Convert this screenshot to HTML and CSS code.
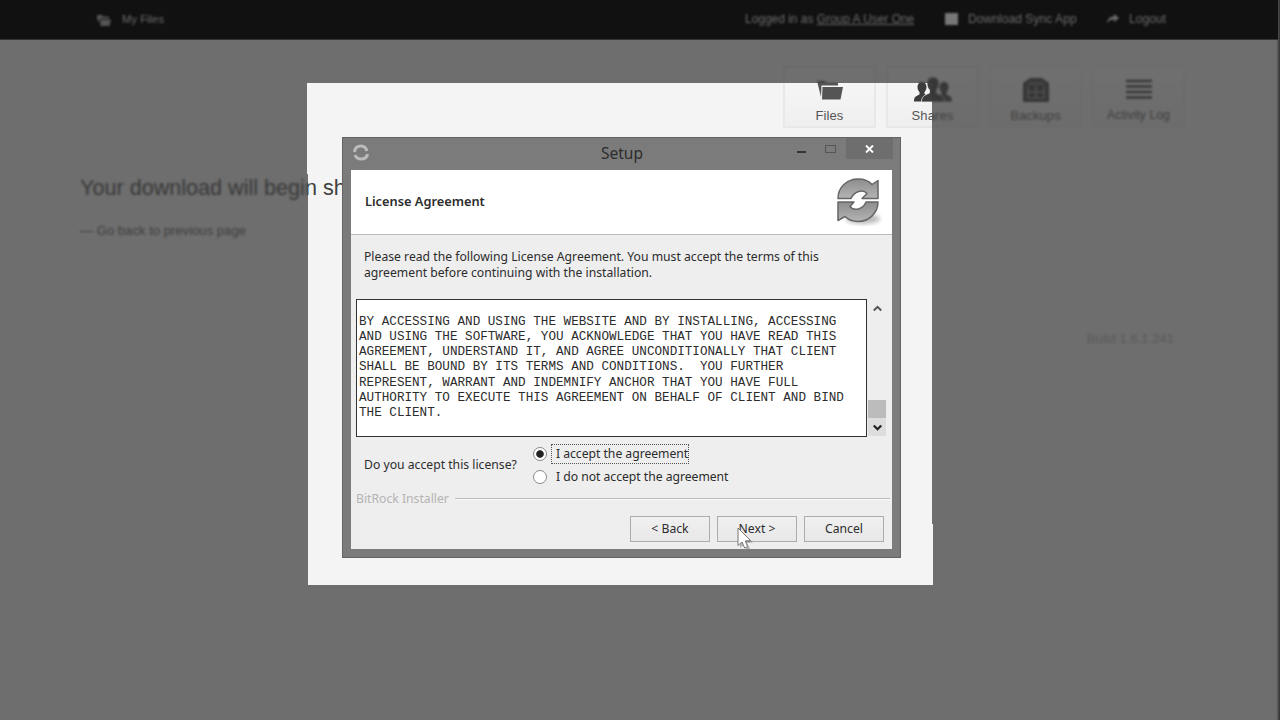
FILE: index.html
```html
<!DOCTYPE html>
<html lang="en">
<head>
<meta charset="utf-8">
<title>Setup</title>
<link rel="stylesheet" href="styles.css">
</head>
<body>
<div class="page">
  <header class="topbar">
    <span class="item my-files">
      <svg class="tb-folder" width="14" height="12" viewBox="0 0 14 12"><path d="M0 1h5l1 1.500h6v2H3.500L2 9 0 4zM4 5.500h10L12.500 12H3z" fill="currentColor"/></svg>
      <span>My Files</span>
    </span>
    <span class="item user">Logged in as&nbsp;<u>Group A User One</u></span>
    <span class="item download"><i class="square"></i><span>Download Sync App</span></span>
    <span class="item logout">
      <svg width="12" height="10" viewBox="0 0 12 10"><path d="M7 0l5 4-5 4V5.500C4 5.500 1.800 6.500 0 9c.5-4 3-6.500 7-6.500z" fill="currentColor"/></svg>
      <span>Logout</span>
    </span>
  </header>
  <nav class="tabs">
    <div class="tab">
      <svg width="28" height="22" viewBox="0 0 28 22"><path d="M1 0h8l1.500 2H22v2.500H5.500L5 16z M6.500 6H27l-2.500 12.500H6z" fill="#555"/></svg>
      <span>Files</span>
    </div>
    <div class="tab">
      <svg width="40" height="26" viewBox="0 0 40 26"><g fill="#3c3c3c"><path d="M9 5c3 0 4.500 2 4.500 5 0 2-.8 4-2 5v2l3 1.500-1 6H1c0-4 1-5 5.500-7v-2.500c-1.200-1-2-3-2-5C4.500 7 6 5 9 5zM31 5c-3 0-4.500 2-4.500 5 0 2 .8 4 2 5v2l-3 1.500 1 6H39c0-4-1-5-5.500-7v-2.500c1.200-1 2-3 2-5C35.500 7 34 5 31 5z"/><path stroke="#eee" stroke-width=".8" d="M20 0c4 0 6 3 6 6.500 0 3-1 5-2.500 6.500v3c6 2.500 8 4 8 9h-23c0-5 2-6.500 8-9v-3C15 11.500 14 9.500 14 6.500 14 3 16 0 20 0z"/></g></svg>
      <span>Shares</span>
    </div>
    <div class="tab">
      <svg width="26" height="26" viewBox="0 0 26 26"><path d="M0 6L7 1h12l7 5v19H0z" fill="#3c3c3c"/><path d="M5 6.500h16M5 9v12h16V9M5 15h16M13 9v12" fill="none" stroke="#888" stroke-width="1.500"/><path d="M7 9h4v4H7zM15 9h4v4h-4zM7 16h4v4H7zM15 16h4v4h-4z" fill="#333"/></svg>
      <span>Backups</span>
    </div>
    <div class="tab">
      <svg width="26" height="24" viewBox="0 0 26 24"><path d="M0 2h26M0 7.500h26M0 13h26M0 18.500h26" stroke="#3c3c3c" stroke-width="2.400"/></svg>
      <span>Activity Log</span>
    </div>
  </nav>
  <main class="content">
    <h1>Your download will begin sh</h1>
    <p class="back">— Go back to previous page</p>
    <p class="build">Build 1.6.1.241</p>
  </main>
</div>
<div class="dimmer"></div>

<section class="dialog">
  <div class="titlebar">
    <svg class="app-icon" width="16" height="17" viewBox="0 0 16 17"><path d="M1.500 8C2 3.500 5 2 8 2s5 1.500 6 5M14.500 10c-.5 4-3.500 5-6.500 5s-5-1.500-6-4" fill="none" stroke="#bbb" stroke-width="3"/></svg>
    <span class="title">Setup</span>
    <div class="controls">
      <i class="min"></i><i class="max"></i>
      <span class="close"><svg width="9" height="8" viewBox="0 0 9 8"><path d="M1 .5l7 7M8 .5l-7 7" stroke="#fff" stroke-width="1.900"/></svg></span>
    </div>
  </div>
  <div class="client">
    <div class="banner">
      <h2>License Agreement</h2>
      <svg class="sync" width="46" height="50" viewBox="0 0 46 50">
        <defs><linearGradient id="g" x1="0" y1="0" x2="0" y2="1"><stop offset="0" stop-color="#8d8d8d"/><stop offset="1" stop-color="#b4b4b4"/></linearGradient></defs>
        <ellipse class="soft" cx="27" cy="43" rx="17" ry="5" fill="#bbb"/>
        <g fill="url(#g)" stroke="#666" stroke-width="1.500" stroke-linejoin="round">
          <path d="M2 22.500C2 11 11 3 22 3c6 0 11 2 14 5.500l6-4v18H26l5-5c-4-5-13-2-16 5z"/>
          <path d="M42 26c0 11-9 19.500-20 19.500-6 0-10-2-13-5L2 44.500V26h16l-4 4.500c4 5 13 3 16-4.500z"/>
        </g>
      </svg>
    </div>
    <p class="intro">Please read the following License Agreement. You must accept the terms of this<br>agreement before continuing with the installation.</p>
    <div class="license">
      <pre>BY ACCESSING AND USING THE WEBSITE AND BY INSTALLING, ACCESSING
AND USING THE SOFTWARE, YOU ACKNOWLEDGE THAT YOU HAVE READ THIS
AGREEMENT, UNDERSTAND IT, AND AGREE UNCONDITIONALLY THAT CLIENT
SHALL BE BOUND BY ITS TERMS AND CONDITIONS.  YOU FURTHER
REPRESENT, WARRANT AND INDEMNIFY ANCHOR THAT YOU HAVE FULL
AUTHORITY TO EXECUTE THIS AGREEMENT ON BEHALF OF CLIENT AND BIND
THE CLIENT.</pre>
      <div class="scroll">
        <svg width="9" height="7" viewBox="0 0 9 7"><path d="M.8 5.500L4.500 1.800l3.700 3.700" fill="none" stroke="#555" stroke-width="2"/></svg>
        <i class="thumb"></i>
        <span class="down"><svg width="9" height="7" viewBox="0 0 9 7"><path d="M.8 1.500l3.700 3.700 3.700-3.700" fill="none" stroke="#222" stroke-width="2.300"/></svg></span>
      </div>
    </div>
    <div class="question">
      <span class="ask">Do you accept this license?</span>
      <div class="options">
        <div class="option"><i class="radio on"></i><span class="label focus">I accept the agreement</span></div>
        <div class="option"><i class="radio"></i><span class="label">I do not accept the agreement</span></div>
      </div>
    </div>
    <div class="brand"><span>BitRock Installer</span><i></i></div>
    <div class="buttons">
      <span class="btn">&lt; Back</span>
      <span class="btn">Next &gt;</span>
      <span class="btn">Cancel</span>
    </div>
  </div>
</section>
<svg class="cursor" width="18" height="24" viewBox="0 0 18 24"><path d="M3 3v18l4-3.500 3 5.500 3-1.500-3-5.500 6-.5z" fill="#777" opacity=".5"/><path d="M1 1v17.500l4-3.500 2.700 6 3-1.300L8.200 14l5.300-.5z" fill="#fff" stroke="#777" stroke-width="1"/></svg>
</body>
</html>
```
FILE: styles.css
```css
* { box-sizing: border-box; }
body { margin: 0; width: 1280px; height: 720px; overflow: hidden; position: relative; background: #f4f4f4; font-family: "Liberation Sans", Arial, sans-serif; }
h1, h2, p, pre { margin: 0; }
i { display: block; flex: none; }
svg { display: block; flex: none; }
.page { height: 720px; border-right: 2px solid #333; }

.topbar { position: relative; z-index: 3; height: 40px; display: flex; align-items: center; padding: 0 111px 2px 97px; background: #111; border-bottom: 1px solid #333; color: #6c6c6c; font-size: 11.300px; white-space: nowrap; }
.item { display: flex; align-items: center; filter: blur(.8px); }
.my-files { gap: 11px; margin-right: auto; }
.tb-folder { color: #555; margin-top: 3px; }
.user { width: 169px; margin-right: 31px; font-size: 11.950px; }
.download { width: 133px; margin-right: 29px; gap: 10px; font-size: 12.150px; }
.square { width: 13px; height: 12px; background: #777; }
.logout { gap: 10px; width: 60px; font-size: 12.150px; }

.tabs { display: flex; justify-content: flex-end; gap: 10px; padding: 26px 93px 0 0; }
.tab { width: 93px; height: 62px; border: 2px solid #e8e8e8; background: linear-gradient(#f8f8f8, #efefef); display: flex; flex-direction: column; align-items: center; justify-content: flex-end; gap: 4px; padding-bottom: 2px; font-size: 13px; color: #555; letter-spacing: .1px; white-space: nowrap; }
.tab:nth-child(n+3) { border-color: #ececec; }
.tab span { line-height: 17px; }
.tab:last-child span { font-size: 12.300px; letter-spacing: 0; }

.content { padding: 48px 104px 0 80px; color: #3f3f3f; }
.content h1 { font-size: 21.600px; line-height: 24px; font-weight: 400; }
.back { margin-top: 22px; font-size: 13.100px; line-height: 18px; color: #555; }
.build { margin-top: 91px; text-align: right; font-size: 13.100px; line-height: 16px; color: #b0b0b0; }

.dimmer { position: absolute; inset: 0; z-index: 2; background: rgba(54, 54, 54, .705); backdrop-filter: blur(.8px); clip-path: polygon(evenodd, 0 0, 1280px 0, 1280px 720px, 0 720px, 0 0, 307px 83px, 932px 83px, 932px 524px, 933px 524px, 933px 585px, 308px 585px, 308px 174px, 307px 174px, 307px 83px, 0 0); }

.dialog { position: absolute; z-index: 4; left: 342px; top: 137px; width: 559px; height: 421px; padding: 0 8px 8px; border: 1px solid #646464; background: #7b7b7b; font: 12.200px/16px "Noto Sans", "Open Sans", sans-serif; color: #2c2c2c; white-space: nowrap; }
.titlebar { height: 32px; display: flex; align-items: flex-start; }
.app-icon { margin: 6px 0 0 2px; }
.title { margin: 4px auto 0 232px; font-size: 15.500px; line-height: 22px; }
.controls { display: flex; margin-right: -1px; }
.min { width: 9px; height: 2px; margin: 13px 19px 0 0; background: #333; }
.max { width: 11px; height: 8px; margin: 7px 10px 0 0; border: 1px solid #555; }
.close { width: 47px; height: 21px; background: #6e6e6e; display: flex; align-items: center; justify-content: center; }
.client { height: 379px; background: #eee; }
.banner { height: 65px; background: #fff; border-bottom: 1px solid #bbb; display: flex; justify-content: space-between; align-items: flex-start; padding: 6px 10px 0 14px; }
.banner h2 { font-size: 12.800px; line-height: 18px; margin-top: 16px; font-weight: 600; }
.soft { filter: blur(2px); }
.intro { padding: 14px 0 0 13px; height: 64px; }
.license { display: flex; padding-left: 5px; }
.license pre { width: 511px; height: 138px; border: 1px solid #333; background: #fff; padding: 14px 0 0 2px; font: 12.640px/15.150px "Liberation Mono", monospace; }
.scroll { width: 18px; height: 137px; display: flex; flex-direction: column; align-items: center; padding-top: 6px; margin-left: 1px; }
.thumb { width: 18px; height: 18px; margin-top: auto; background: #bcbcbc; }
.down { width: 18px; height: 18px; background: #ddd; display: flex; align-items: center; justify-content: center; }
.question { display: flex; height: 54px; padding: 7px 0 0 13px; }
.ask { width: 169px; margin-top: 13px; }
.options { display: flex; flex-direction: column; gap: 3px; }
.option { display: flex; align-items: center; gap: 4px; height: 20px; }
.radio { width: 14px; height: 14px; border: 1px solid #888; border-radius: 50%; background: #fff; }
.radio.on { background: radial-gradient(circle, #222 0 3.300px, #fff 4.300px); }
.label { padding: 0 0 0 4px; line-height: 18px; border: 1px dotted transparent; letter-spacing: -.03px; }
.focus { border-color: #555; }
.brand { display: flex; align-items: center; gap: 6px; height: 16px; margin-left: 5px; color: #b4b4b4; }
.brand i { flex: 1; height: 2px; margin-right: 2px; border-top: 1px solid #bbb; border-bottom: 1px solid #fafafa; }
.buttons { display: flex; justify-content: flex-end; gap: 7px; padding: 9px 8px 0 0; }
.btn { width: 80px; height: 26px; border: 1px solid #acacac; background: linear-gradient(#f0f0f0, #e8e8e8); text-align: center; line-height: 24px; }
.cursor { position: absolute; z-index: 5; left: 737px; top: 527px; }
```
